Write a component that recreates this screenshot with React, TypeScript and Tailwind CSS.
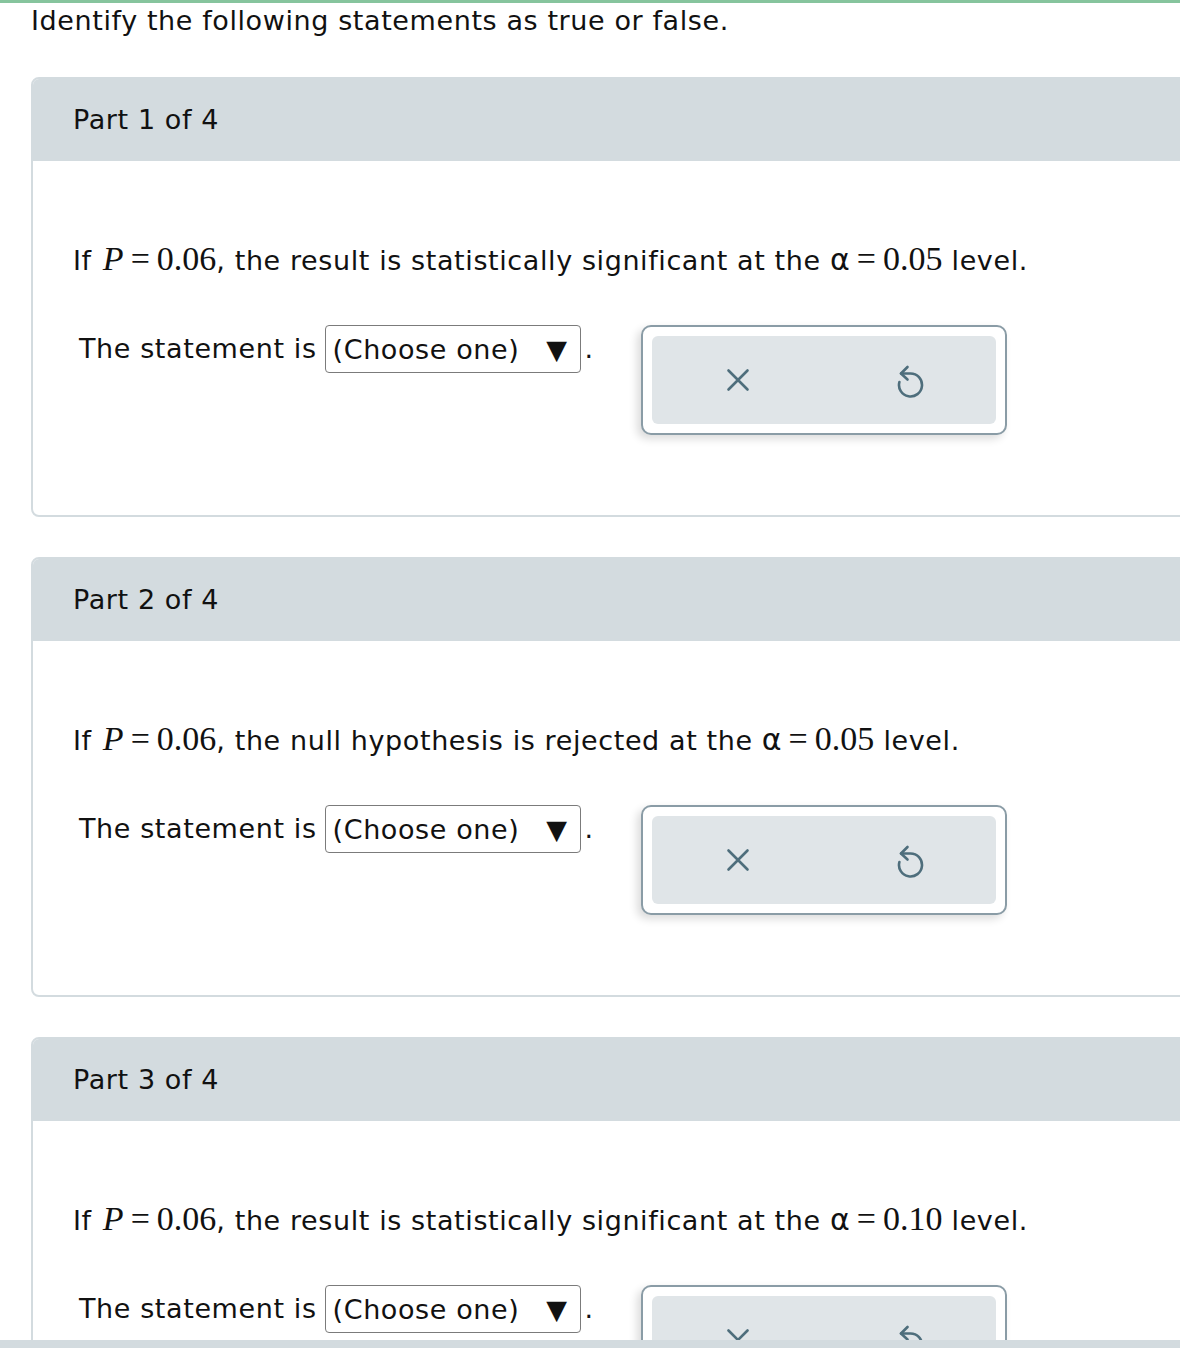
import React from "react";

const parts = [
  { n: 1, tail: ", the result is statistically significant at the ", a: "0.05" },
  { n: 2, tail: ", the null hypothesis is rejected at the ", a: "0.05" },
  { n: 3, tail: ", the result is statistically significant at the ", a: "0.10" },
];

function XIcon() {
  return (
    <svg width="24" height="24" viewBox="0 0 24 24" fill="none" stroke="#4e6e7c" strokeWidth="2.6" strokeLinecap="round">
      <path d="M2.5 2.5 L21.5 21.5 M21.5 2.5 L2.5 21.5" />
    </svg>
  );
}

function UndoIcon() {
  return (
    <svg width="28" height="36" viewBox="0 0 28 36" fill="none" stroke="#4e6e7c" strokeWidth="2.6" strokeLinecap="round" strokeLinejoin="round">
      <path d="M5 11.5 L14.5 11.5 A11.5 11.5 0 1 1 3.4 20" />
      <path d="M11.5 5 L5 11.5 L11.5 17.5" />
    </svg>
  );
}

function Part({ n, tail, a }: { n: number; tail: string; a: string }) {
  return (
    <div className="mb-[40px] -mr-[40px] rounded-[8px] border-2 border-[#d3dbdf] overflow-hidden">
      <div className="h-[82px] bg-[#d3dbdf] flex items-center pl-[40px] text-[27px] tracking-[0.6px] text-[#111]">
        Part {n} of 4
      </div>
      <div className="pl-[40px] pt-[80px] pb-[80px]">
        <p className="text-[27px] leading-[36px] tracking-[0.6px] text-[#111] whitespace-nowrap">
          If{" "}
          <span className="font-['Liberation_Serif',serif] text-[34px] italic tracking-normal ml-[2px]">P</span>
          <span className="font-['Liberation_Serif',serif] text-[34px] tracking-normal mx-[7px]">=</span>
          <span className="font-['Liberation_Serif',serif] text-[34px] tracking-normal">0.06</span>
          {tail}
          <span className="font-['DejaVu_Sans',sans-serif] text-[30px] tracking-normal">α</span>
          <span className="font-['Liberation_Serif',serif] text-[34px] tracking-normal mx-[7px]">=</span>
          <span className="font-['Liberation_Serif',serif] text-[34px] tracking-normal">{a}</span> level.
        </p>
        <div className="mt-[46px] flex items-start">
          <div className="w-[568px] pl-[6px] flex items-center h-[48px] text-[27px] tracking-[0.6px] text-[#111]">
            <span>The statement is</span>
            <div className="ml-[8px] w-[256px] h-[48px] border border-[#7b7b7b] rounded-[4px] flex items-center justify-between pl-[7px] pr-[12px] pt-[3px]">
              <span>(Choose one)</span>
              <span className="text-[27px]">▼</span>
            </div>
            <span className="ml-[4px]">.</span>
          </div>
          <div className="w-[366px] h-[110px] border-2 border-[#8a9ca6] rounded-[10px] bg-white p-[9px] shadow-[-4px_4px_8px_rgba(0,0,0,0.14)]">
            <div className="h-full rounded-[6px] bg-[#e0e5e8] grid grid-cols-2">
              <div className="flex items-center justify-center">
                <XIcon />
              </div>
              <div className="flex items-center justify-center">
                <UndoIcon />
              </div>
            </div>
          </div>
        </div>
      </div>
    </div>
  );
}

export default function App() {
  return (
    <div className="w-[1180px] h-[1348px] overflow-hidden flex flex-col bg-white font-['DejaVu_Sans',sans-serif]">
      <div className="h-[3px] bg-[#86c49d] shrink-0" />
      <div className="flex-1 overflow-hidden pl-[31px]">
        <p className="text-[27px] leading-[36px] tracking-[0.6px] text-[#111]">Identify the following statements as true or false.</p>
        <div className="mt-[38px]">
          {parts.map((pt) => (
            <Part key={pt.n} {...pt} />
          ))}
        </div>
      </div>
      <div className="h-[8px] bg-[#d3dbdf] shrink-0" />
    </div>
  );
}
